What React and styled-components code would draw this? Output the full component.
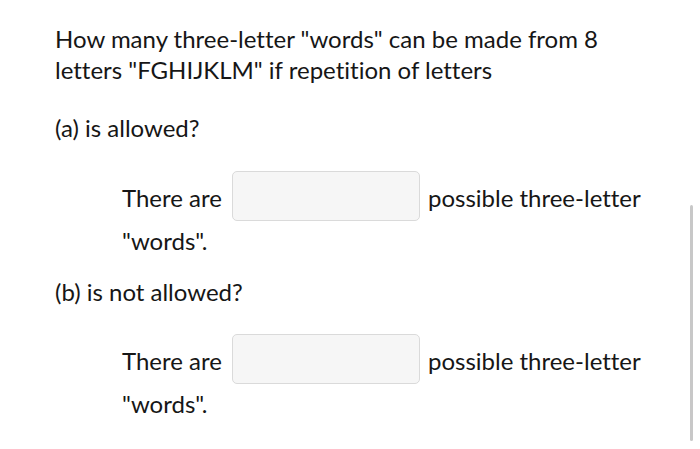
import React from "react";
import styled, { createGlobalStyle } from "styled-components";

const Global = createGlobalStyle`
  html, body { margin: 0; padding: 0; background: #fff; }
  body {
    font-family: Lato, "Open Sans", sans-serif;
    color: #161616;
    font-variant-ligatures: none;
  }
`;

const Page = styled.div`
  position: relative;
  width: 700px;
  height: 449px;
  overflow: hidden;
  padding: 23px 40px 0 55px;
  box-sizing: border-box;
`;

const Question = styled.p`
  margin: 0;
  font-size: 24px;
  line-height: 31px;
  max-width: 570px;
`;

const Part = styled.p`
  margin: ${(p) => p.$top}px 0 0 0;
  font-size: 24px;
  line-height: 30px;
`;

const Answer = styled.p`
  margin: ${(p) => p.$top}px 0 0 67px;
  font-size: 24px;
  line-height: 40px;
  max-width: 545px;
`;

const Box = styled.input`
  display: inline-block;
  vertical-align: 4px;
  width: 188px;
  height: 50px;
  box-sizing: border-box;
  margin: 0 8px 0 10px;
  border: 1px solid #dadada;
  border-radius: 5px;
  background: #f6f6f6;
  font-size: 20px;
`;

const Scroll = styled.div`
  position: absolute;
  right: 7px;
  top: 205px;
  width: 3px;
  height: 236px;
  background: #c8c8c8;
  border-radius: 2px;
`;

function Item({ top }) {
  return (
    <Answer $top={top}>
      <span>There are</span>
      <Box type="text" />
      <span>possible three-letter</span> <span>"words".</span>
    </Answer>
  );
}

export default function App() {
  return (
    <>
      <Global />
      <Page>
        <Question>
          How many three-letter "words" can be made from 8 letters "FGHIJKLM" if
          repetition of letters
        </Question>
        <Part $top={28}>(a) is allowed?</Part>
        <Item top={28} />
        <Part $top={16}>(b) is not allowed?</Part>
        <Item top={27} />
        <Scroll />
      </Page>
    </>
  );
}
